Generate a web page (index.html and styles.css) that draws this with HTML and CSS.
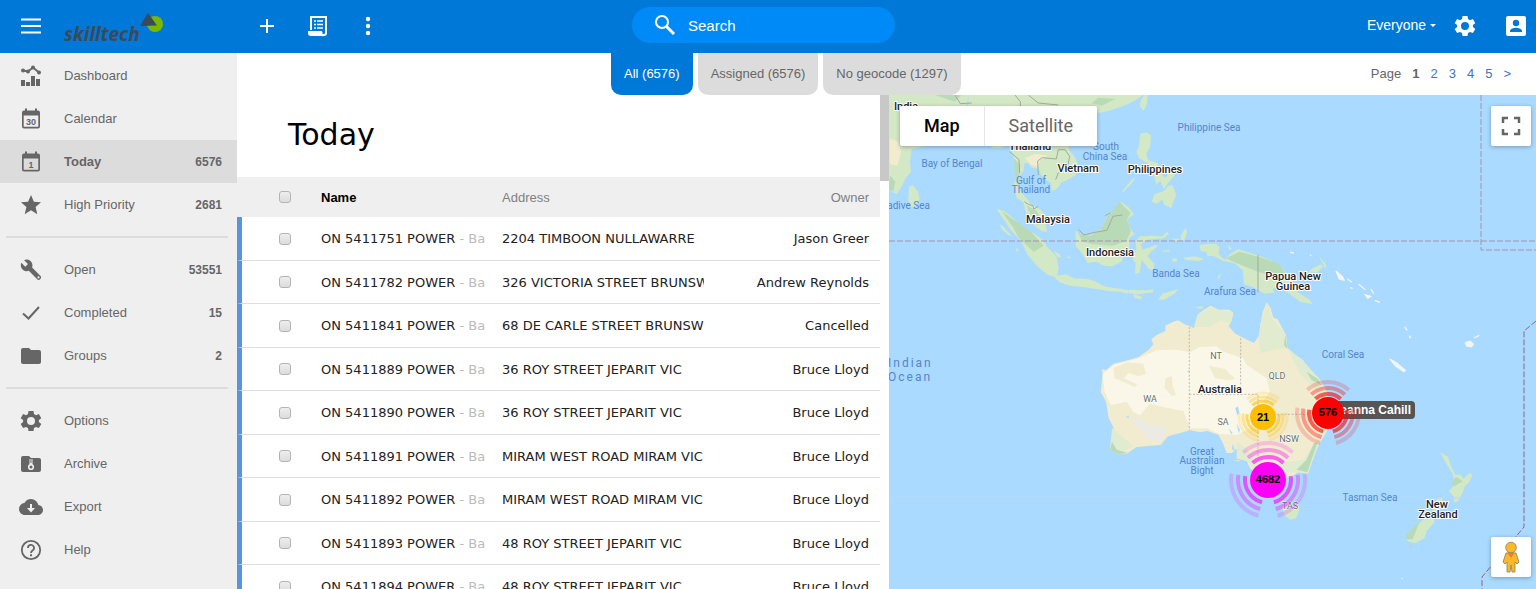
FILE: index.html
```html
<!DOCTYPE html>
<html lang="en">

<head>
    <meta charset="UTF-8">
    <meta name="viewport" content="width=device-width, initial-scale=1.0">
    <title>Today - skilltech</title>
    <link rel="stylesheet" href="styles.css">
</head>

<body>

    <header class="topbar">
        <div class="topbar-left">
            <button class="icon-btn" aria-label="Menu">
                <svg width="22" height="22" viewBox="0 0 22 22"><path d="M1 4.500h20M1 11h20M1 17.500h20" stroke="#fff" stroke-width="2"/></svg>
            </button>
            <a class="logo" href="#">
                <span>skilltech</span>
                <svg width="24" height="20" viewBox="0 0 24 20"><circle cx="15" cy="11" r="8" fill="#7ab800"/><path d="M0 13L8 0l9 12.500z" fill="#3c4a57"/></svg>
            </a>
            <div class="actions">
                <button class="icon-btn" aria-label="Add">
                    <svg width="24" height="24" viewBox="0 0 24 24"><path d="M12 5v14M5 12h14" stroke="#fff" stroke-width="2"/></svg>
                </button>
                <button class="icon-btn" aria-label="Reports">
                    <svg width="24" height="24" viewBox="0 0 24 24" fill="none" stroke="#fff" stroke-width="2"><path d="M5 16V3h15v16a2 2 0 0 1-2 2H5a2 2 0 0 1-2-2v-1h12v1a2 2 0 0 0 3 2"/><path d="M3.500 19.500h13" stroke-width="3"/><path d="M8 7h2M11 7h6M8 10.500h2M11 10.500h6M8 14h2M11 14h6" stroke-width="1.500"/></svg>
                </button>
                <button class="icon-btn" aria-label="More">
                    <svg width="24" height="24" viewBox="0 0 24 24" fill="#fff"><circle cx="11" cy="5" r="2.200"/><circle cx="11" cy="12" r="2.200"/><circle cx="11" cy="19" r="2.200"/></svg>
                </button>
            </div>
        </div>

        <label class="search">
            <svg width="22" height="22" viewBox="0 0 22 22" fill="none" stroke="#fff"><circle cx="8" cy="8" r="6" stroke-width="2"/><path d="M12.500 12.500l7.500 7.500" stroke-width="3"/></svg>
            <input type="text" placeholder="Search" aria-label="Search">
        </label>

        <div class="topbar-right">
            <button class="user-filter">Everyone <i class="caret"></i></button>
            <button class="icon-btn" aria-label="Settings">
                <svg width="24" height="24" viewBox="0 0 24 24" fill="#fff"><use href="#gear"/></svg>
            </button>
            <button class="icon-btn account" aria-label="Account">
                <svg width="22" height="22" viewBox="0 0 22 22"><rect x="1" y="1" width="20" height="20" rx="2" fill="#fff"/><circle cx="11" cy="8" r="3.200" fill="#0078d8"/><path d="M5 17v-1c0-2 4-3.200 6-3.200s6 1.200 6 3.200v1z" fill="#0078d8"/></svg>
            </button>
        </div>
    </header>

    <div class="page">
        <nav class="sidebar">
            <a href="#">
                <svg width="24" height="24" viewBox="0 0 24 24"><path d="M2 16h4v6H2zM7 18h4v4H7zM12 12h4v10h-4zM17 15h4v7h-4z"/><path d="M4 6.500l5 1 5-4 6 5" fill="none" stroke="#666" stroke-width="1.800"/><circle cx="4" cy="6.500" r="2"/><circle cx="9" cy="7.500" r="2"/><circle cx="14" cy="3.500" r="2"/><circle cx="20" cy="8.500" r="2"/></svg>
                <span>Dashboard</span>
            </a>
            <a href="#">
                <svg width="24" height="24" viewBox="0 0 24 24"><use href="#cal"/><text x="12" y="18" class="cal-day">30</text></svg>
                <span>Calendar</span>
            </a>
            <a href="#" class="active">
                <svg width="24" height="24" viewBox="0 0 24 24"><use href="#cal"/><text x="12" y="18" class="cal-day">1</text></svg>
                <span>Today</span><b>6576</b>
            </a>
            <a href="#">
                <svg width="24" height="24" viewBox="0 0 24 24"><path d="M12 2l2.900 6.700 7.100.5-5.400 4.700 1.700 7.300L12 17.300l-6.300 3.900 1.700-7.300L2 9.200l7.100-.5z"/></svg>
                <span>High Priority</span><b>2681</b>
            </a>
            <hr>
            <a href="#">
                <svg width="24" height="24" viewBox="0 0 24 24"><path fill-rule="evenodd" d="M22 18l-9.100-9.100c.9-2.300.4-5-1.500-6.900-2-2-5-2.400-7.400-1.300L8.300 5 5.300 8 .9 3.700C-.2 6.100.3 9.100 2.300 11.100c1.900 1.900 4.600 2.400 6.900 1.500l9.100 9.100c1 1.300 2.500 1.300 3.700 0 1.200-1.200 1.300-2.500 0-3.700zM20 18.700a1.200 1.200 0 1 1 0 2.400 1.200 1.200 0 0 1 0-2.400z" transform="translate(1.500 1.500) scale(.9)"/></svg>
                <span>Open</span><b>53551</b>
            </a>
            <a href="#">
                <svg width="24" height="24" viewBox="0 0 24 24"><path d="M4 12.500l5.500 5L20 6" fill="none" stroke="#666" stroke-width="2"/></svg>
                <span>Completed</span><b>15</b>
            </a>
            <a href="#">
                <svg width="24" height="24" viewBox="0 0 24 24"><use href="#folder"/></svg>
                <span>Groups</span><b>2</b>
            </a>
            <hr>
            <a href="#">
                <svg width="24" height="24" viewBox="0 0 24 24"><use href="#gear"/></svg>
                <span>Options</span>
            </a>
            <a href="#">
                <svg width="24" height="24" viewBox="0 0 24 24"><use href="#folder"/><path d="M10 8h4M10 10h4" stroke="#efefef"/><path d="M10.500 11h3v2h-3z" fill="#efefef"/><circle cx="12" cy="15" r="2.300" fill="none" stroke="#efefef" stroke-width="1.600"/></svg>
                <span>Archive</span>
            </a>
            <a href="#">
                <svg width="24" height="24" viewBox="0 0 24 24"><path d="M19.350 10.040A7.490 7.490 0 0 0 12 4C9.110 4 6.600 5.640 5.350 8.040A5.994 5.994 0 0 0 0 14c0 3.310 2.690 6 6 6h13c2.760 0 5-2.240 5-5 0-2.640-2.050-4.780-4.650-4.960z"/><path d="M11 9h2v4h3l-4 4.500L8 13h3z" fill="#efefef"/></svg>
                <span>Export</span>
            </a>
            <a href="#">
                <svg width="24" height="24" viewBox="0 0 24 24"><circle cx="12" cy="12" r="9.200" fill="none" stroke="#666" stroke-width="1.800"/><path d="M9 10a3 3 0 1 1 4.500 2.500C12.500 13.300 12 13.800 12 15" fill="none" stroke="#666" stroke-width="1.800"/><path d="M11 16.300h2v2h-2z"/></svg>
                <span>Help</span>
            </a>
        </nav>

        <main>
            <div class="subbar">
                <div class="tabs">
                    <button class="tab selected">All (6576)</button>
                    <button class="tab">Assigned (6576)</button>
                    <button class="tab">No geocode (1297)</button>
                </div>
                <div class="pager">
                    <span>Page</span>
                    <b>1</b>
                    <a href="#">2</a>
                    <a href="#">3</a>
                    <a href="#">4</a>
                    <a href="#">5</a>
                    <a href="#">&gt;</a>
                </div>
            </div>

            <div class="content">
                <section class="list">
                    <h1>Today</h1>
                    <table>
                        <colgroup>
                            <col class="c-check"><col class="c-name"><col class="c-addr"><col>
                        </colgroup>
                        <thead>
                            <tr>
                                <th><input type="checkbox" aria-label="Select all"></th>
                                <th class="sorted">Name</th>
                                <th>Address</th>
                                <th>Owner</th>
                            </tr>
                        </thead>
                        <tbody>
                            <tr>
                                <td><input type="checkbox" aria-label="Select 5411751"></td>
                                <td><div>ON 5411751 POWER <i>- Ba</i></div></td>
                                <td><div>2204 TIMBOON NULLAWARRE</div></td>
                                <td>Jason Greer</td>
                            </tr>
                            <tr>
                                <td><input type="checkbox" aria-label="Select 5411782"></td>
                                <td><div>ON 5411782 POWER <i>- Ba</i></div></td>
                                <td><div>326 VICTORIA STREET BRUNSW</div></td>
                                <td>Andrew Reynolds</td>
                            </tr>
                            <tr>
                                <td><input type="checkbox" aria-label="Select 5411841"></td>
                                <td><div>ON 5411841 POWER <i>- Ba</i></div></td>
                                <td><div>68 DE CARLE STREET BRUNSW</div></td>
                                <td>Cancelled</td>
                            </tr>
                            <tr>
                                <td><input type="checkbox" aria-label="Select 5411889"></td>
                                <td><div>ON 5411889 POWER <i>- Ba</i></div></td>
                                <td><div>36 ROY STREET JEPARIT VIC</div></td>
                                <td>Bruce Lloyd</td>
                            </tr>
                            <tr>
                                <td><input type="checkbox" aria-label="Select 5411890"></td>
                                <td><div>ON 5411890 POWER <i>- Ba</i></div></td>
                                <td><div>36 ROY STREET JEPARIT VIC</div></td>
                                <td>Bruce Lloyd</td>
                            </tr>
                            <tr>
                                <td><input type="checkbox" aria-label="Select 5411891"></td>
                                <td><div>ON 5411891 POWER <i>- Ba</i></div></td>
                                <td><div>MIRAM WEST ROAD MIRAM VIC</div></td>
                                <td>Bruce Lloyd</td>
                            </tr>
                            <tr>
                                <td><input type="checkbox" aria-label="Select 5411892"></td>
                                <td><div>ON 5411892 POWER <i>- Ba</i></div></td>
                                <td><div>MIRAM WEST ROAD MIRAM VIC</div></td>
                                <td>Bruce Lloyd</td>
                            </tr>
                            <tr>
                                <td><input type="checkbox" aria-label="Select 5411893"></td>
                                <td><div>ON 5411893 POWER <i>- Ba</i></div></td>
                                <td><div>48 ROY STREET JEPARIT VIC</div></td>
                                <td>Bruce Lloyd</td>
                            </tr>
                            <tr>
                                <td><input type="checkbox" aria-label="Select 5411894"></td>
                                <td><div>ON 5411894 POWER <i>- Ba</i></div></td>
                                <td><div>48 ROY STREET JEPARIT VIC</div></td>
                                <td>Bruce Lloyd</td>
                            </tr>
                        </tbody>
                    </table>
                </section>

                <div class="scrollbar"><div class="thumb"></div></div>

                <section class="map">
                    <svg class="map-canvas" viewBox="0 0 647 494" preserveAspectRatio="xMinYMin slice">
                        <!-- south east asia -->
                        <g transform="translate(-4 0) scale(.3333)">
                            <g class="land">
                                <path d="M12 0H250L245 40 262 90 205 100 160 140 100 158 80 163 75 200 78 230 62 250 48 278 35 298 20 290 12 250z"/>
                                <path d="M72 275l12-4 14 18 6 22-10 22-16 4-8-22z"/>
                                <path d="M250 0H775L758 12 735 25 700 38 670 48 640 54 630 62 540 80 545 130 553 165 572 190 580 215 570 242 545 256 530 262 518 280 500 289 498 265 480 252 468 240 462 222 440 218 430 205 418 205 416 228 405 240 398 265 408 290 425 310 438 328 465 342 478 358 482 385 486 412 470 408 440 385 422 350 415 322 395 308 386 270 394 240 392 210 380 170 370 150 345 160 322 158 300 100 270 70 250 40z"/>
                                <path d="M778 0h10l-2 25-10 22-12-14 4-18z"/>
                                <path d="M335 342l22 6 28 22 28 26 32 18 28 20 14 22 28 28 6 38-6 26-30-10-32-28-26-32-18-38-32-36-22-32z"/>
                                <path d="M512 542l30-4 26 12 40 2 26 8 20 12 28 6 30 4-4 8-36-2-38-6-40-6-38-4-32-10-14-12z"/>
                                <path d="M706 582l24 4-2 10-18-4zM732 584l50 2 24-4-2 10-46 6-28-4zM745 598l28 8-8 8-18-8zM820 614l12-18 48-14-12 14-30 18z"/>
                                <path d="M572 404l10 14 28 4 36-18 18-34 16-14 28-36 22 16 18 22-20 14 4 20 16 26-16 12 2 26-18 18-6 26-28 14-26-2-22-12-26 4-16-28-20-22z"/>
                                <path d="M752 440l12-16 36-2 32 2 14-14 6 8-18 12-46 4-22 14 8 16 36-14 10 2-22 18-10 14 20 22-2 20-14-4-22-28-6 40-14 2 2-34-10-8 12-32z"/>
                                <path d="M766 116l18-4 14 8-2 34-12 22 6 20 28 8 6 16-22-4-20-16-20-10-8-20 8-16z"/>
                                <path d="M800 320l8-22 28-10 14-16 12-2 12 30-12 26-2 14-22-10-6-16-18 12zM806 238l18-6 16 16 22-22 8 14-14 16-20 26-10-24-12 10z"/>
                                <path d="M712 288l28-34 12-6-16 22-22 22z"/>
                                <path d="M888 420l14-22 4 12-6 22-12 8zM862 430l20 2v6h-18zM895 488l34-4 28 8-16 6-40-4zM860 492l14-2 4 8-12 4zM944 456l40-10h12v36l-18-8-30-6zM830 468l24-4v6h-22zM930 638l26-6-6 10z"/>
                                <path d="M504 466l18 10 8 12-12-2zM344 388l10 6 26 28-10-2-20-18zM390 456l12 10-6 4zM545 484l12 2-4 6z"/>
                            </g>
                            <g class="forest">
                                <path d="M580 418l36 4 30-16 20-38 38-48 32 34-10 20 12 34-14 30-40 14-60-4-30-8-12-20z"/>
                                <path d="M350 348l36 26 50 34 40 44-30 18-44-40-20-36z"/>
                                <path d="M425 332l30 16 20 34-18 8-22-34zM386 190l20 20-6 60-8-10zM540 80h50l-10 10 50-28-30 4z"/>
                                <path d="M150 0h80l-20 20zM640 8l50 4-40 20-30-8zM15 240l16 20-6 30-12-8z"/>
                            </g>
                            <path class="dry" d="M14 130l26 10 8 30-10 42-24-4zM420 190l30-14 40 6-24 14-8 20-20-6z"/>
                            <path class="border" d="M390 0l16 20 0 30M430 0l30 24 60 6M210 0l16 26 34-2M374 170l28 24 2 40M460 240l-2-42 14-10 42 4 6-28 20 0 14 20-6 30-28 20-8 20M418 320l12 8 14 4 2 10 14-8M582 404l14 16 34-8 36-6 18-42 28-4M660 362l16-8"/>
                        </g>
                        <!-- papua new guinea and the islands -->
                        <g transform="translate(317 0) scale(.3333)">
                            <g class="land">
                                <path d="M-20 450l34-4 26 8-2 24 18 16 16-16 24-16 24 8 40 12 40 16 28 20 20 30 4 24 26 22 34 20 8 14-38-8-34-26-22-12-26-2 4 14-28 2-36-20-26-8-4-42-24-22-34-6-28-14-20-2-4-16-18-8z"/>
                                <path d="M320 520l24-12 8 6-18 18-28 2zM340 486l20 22-2 14-10-20zM64 448l14 14-8 2zM46 534l-8 22-2-12z"/>
                            </g>
                            <path class="forest" d="M60 490l40-20 60 16 60 20 18 30-16 16-66-22-60-24z"/>
                            <path class="border" d="M156 480v112"/>
                            <path class="isle" d="M390 528l20 18 4 10-14-4zM424 552l14 10M458 568l20 16M495 582l8 14M478 600l16 4-8 6zM506 616l16 6M432 578l8 2M252 472l12 2M312 480l4 2"/>
                        </g>
                        <!-- australia -->
                        <g transform="translate(201 200) scale(.3333)">
                            <path class="dry" d="M38 238L36 222 48 226 70 206 104 198 146 186 176 164 190 148 184 132 204 118 226 108 226 92 250 80 264 76 284 88 300 94 312 100 322 60 340 46 362 32 386 44 418 44 430 54 424 80 416 94 436 116 462 130 492 144 506 124 512 84 518 52 530 22 542 40 550 68 562 72 574 94 588 120 592 158 610 178 640 196 654 226 684 246 704 276 720 320 718 370 710 410 686 450 662 500 654 536 624 532 600 548 560 540 500 536 480 520 470 498 440 490 444 458 426 474 410 474 400 448 386 420 352 408 330 412 300 406 262 416 234 424 212 450 140 456 110 476 84 478 60 464 66 452 74 420 70 396 56 370 48 320 32 290z"/>
                            <path class="desert" d="M38 238L70 210 146 190 200 166 260 164 300 172 330 156 380 154 400 170 460 190 470 210 530 250 540 290 560 310 500 330 480 400 440 420 386 416 352 400 300 400 240 400 170 370 130 350 110 320 62 330 44 290z"/>
                            <path class="dry" d="M70 220l40-18 50 4 8 30-22 8-30-10-14 16 40 18-8 8-60-26zM226 250l20-8 2 30 10 28-12 4-22-26zM150 360l30-34 40 10 60 12 20 50-60 14-40-28zM356 212l50 10 30 30-20 4-40-6zM560 210l60 10 60 50-10 20-60-30-50-20zM540 290l50 40-40 30-40-30z"/>
                            <path class="green" d="M312 96l12-36 40-24 22 8 42 6-6 34-32-8-30 20zM506 130l6-46 18-60 16 44 42 52 4 38-40 6-40 10zM592 158l48 40 46 52 30 60 2 60-40 100-24 66-34-4-90 4-20-30 130-10 40-60 20-80-10-60-60-60zM66 400l24 20 40 34-44 22-26-14zM440 440l40 30 20 50-30-22-30-8z"/>
                            <path class="forest" d="M586 120l6 42-10-12zM66 440l14 24 34 10-30 4-24-14zM650 230l34 22 10 18-30-16zM620 524l30-30 22-50 10 0-30 88z"/>
                            <path d="M130 366l40 20 60 10-16 44-40-8-20-26-26-20z" fill="#ebeae4"/>
                            <path class="water" d="M436 340l8-6 4 20-6 6zM416 400l12 14-4 4zM440 385l10 20-4 10zM108 366l8-4 0 8zM290 230l10-4-2 6zM428 446l8 24-10-8z"/>
                            <path class="land" d="M576 634l18 8 32-8 2 12-10 24-18 4-18-14zM430 496l22-2-6 6z"/>
                            <path class="isle" d="M900 192l20 12 26 22-4 4-24-16zM944 96l8 10M958 122l4 8"/>
                            <path class="state" d="M298 96v310M452 130v168M298 298h206v190M506 358h150"/>
                        </g>
                        <!-- new zealand -->
                        <g transform="translate(317 215) scale(.3333)">
                            <path class="land" d="M702 426l24 14 10 30 12 24 16 0 8 12 18-16 10 4-10 22-14 14-6 18-14 26-12 2 0-16-16-16 20-22-8-30-18-30zM692 566l18-4-2 20-20 26-4 30-22 26-6 20-28 16-24-6-2-16 22-26 28-22 24-18z"/>
                            <path class="forest" d="M602 672l40-40-12 30-10 26-20 0zM750 500l20 14-24 14-10-8zM610 706l10 0-6 8z"/>
                            <path class="isle" d="M778 98l14-4 10 8-6 8-14-2zM804 84l16-8M586 806h4"/>
                        </g>
                        <path d="M0 403h647" stroke="#b5dafa"/>
                        <path class="frontier" d="M0 146h647M592 0v155h55"/>
                        <path class="frontier dark" d="M647 226l-12 10v196l-42 50v12"/>

                        <g class="country">
                            <text x="17" y="15">India</text>
                            <text x="141" y="55">Thailand</text>
                            <text x="189" y="77">Vietnam</text>
                            <text x="266" y="78">Philippines</text>
                            <text x="159" y="128">Malaysia</text>
                            <text x="221" y="161">Indonesia</text>
                            <text x="404" y="185">Papua New</text>
                            <text x="404" y="195">Guinea</text>
                            <text x="331" y="298">Australia</text>
                            <text x="548" y="413">New</text>
                            <text x="549" y="423">Zealand</text>
                        </g>
                        <g class="sea">
                            <text x="320" y="36">Philippine Sea</text>
                            <text x="217" y="55">South</text>
                            <text x="216" y="65">China Sea</text>
                            <text x="63" y="72">Bay of Bengal</text>
                            <text x="142" y="89">Gulf of</text>
                            <text x="142" y="98">Thailand</text>
                            <text x="9" y="114">Laccadive Sea</text>
                            <text x="287" y="182">Banda Sea</text>
                            <text x="341" y="200">Arafura Sea</text>
                            <text x="454" y="263">Coral Sea</text>
                            <text x="313" y="360">Great</text>
                            <text x="313" y="369">Australian</text>
                            <text x="313" y="379">Bight</text>
                            <text x="481" y="406">Tasman Sea</text>
                        </g>
                        <g class="ocean">
                            <text x="-1" y="272">Indian</text>
                            <text x="-1" y="286">Ocean</text>
                        </g>
                        <g class="state-name">
                            <text x="327" y="264">NT</text>
                            <text x="388" y="284">QLD</text>
                            <text x="261" y="307">WA</text>
                            <text x="334" y="330">SA</text>
                            <text x="400" y="347">NSW</text>
                            <text x="401" y="414">TAS</text>
                        </g>

                        <rect x="432" y="306" width="94" height="18" rx="4" fill="#555"/>
                        <text x="522" y="319" class="pin-name">eanna Cahill</text>

                        <!-- clusters: rings are cut in three arcs, dashes in degrees -->
                        <g class="cluster" transform="translate(374 322)" stroke="#ffbf00">
                            <circle r="16" pathLength="360"/><circle r="20" pathLength="360"/><circle r="24" pathLength="360"/>
                            <circle r="13" class="core" fill="#ffbf00"/><text y="4">21</text>
                        </g>
                        <g class="cluster wide" transform="translate(439 318)" stroke="#ff0000">
                            <circle r="19" pathLength="360"/><circle r="25" pathLength="360"/><circle r="31" pathLength="360"/>
                            <circle r="16" class="core" fill="#ff0000"/><text y="3">576</text>
                        </g>
                        <g class="cluster wide" transform="translate(379 385)" stroke="#ff00ff">
                            <circle r="23" pathLength="360"/><circle r="30" pathLength="360"/><circle r="37" pathLength="360"/>
                            <circle r="18" class="core" fill="#ff00f6"/><text y="3">4682</text>
                        </g>
                    </svg>

                    <div class="map-type">
                        <button class="on">Map</button>
                        <button>Satellite</button>
                    </div>
                    <button class="map-btn fullscreen" aria-label="Full screen">
                        <svg width="20" height="20" viewBox="0 0 20 20"><path d="M2 7V2h5M13 2h5v5M18 13v5h-5M7 18H2v-5" fill="none" stroke="#666" stroke-width="2.500"/></svg>
                    </button>
                    <button class="map-btn pegman" aria-label="Street view">
                        <svg width="20" height="32" viewBox="0 0 20 32"><path d="M5 12h10l3 9-2 2-2-2v10h-3l-1-7-1 7H6V21l-2 2-2-2z" fill="#fbb829" stroke="#8a8060" stroke-width=".8"/><path d="M6 11.500h8l-4 5.500z" fill="#e8832a"/><circle cx="10" cy="6.500" r="5.300" fill="#fbb829" stroke="#8a8060" stroke-width=".8"/></svg>
                    </button>
                </section>
            </div>
        </main>
    </div>

    <!-- shared icon shapes -->
    <svg class="defs" width="0" height="0">
        <symbol id="gear" viewBox="0 0 24 24">
            <path fill-rule="evenodd" d="M9.500 2h5l.5 3 2 1.200 2.900-1.200 2.400 4.200-2.400 1.800v2l2.400 1.900-2.400 4.200-2.900-1.200-2 1.200-.5 2.900h-5L9 19.100l-2-1.200-2.900 1.200-2.400-4.200L4.100 13v-2L1.700 9.200 4.100 5 7 6.200 9 5zM12 8a4 4 0 1 0 0 8 4 4 0 0 0 0-8z"/>
        </symbol>
        <symbol id="cal" viewBox="0 0 24 24">
            <path fill-rule="evenodd" d="M6 1.500h2V3.500h8V1.500h2V3.500h1a2 2 0 0 1 2 2v14a2 2 0 0 1-2 2H5a2 2 0 0 1-2-2v-14a2 2 0 0 1 2-2h1zM4.700 8.500v11.300h14.600V8.500z"/>
        </symbol>
        <symbol id="folder" viewBox="0 0 24 24">
            <path d="M10 4H4a2 2 0 0 0-2 2v12c0 1.100.9 2 2 2h16a2 2 0 0 0 2-2V8a2 2 0 0 0-2-2h-8z"/>
        </symbol>
    </svg>

</body>

</html>
```
FILE: styles.css
```css
* {
    box-sizing: border-box;
}

body {
    margin: 0;
    height: 100vh;
    display: flex;
    flex-direction: column;
    overflow: hidden;
    font-family: "Liberation Sans", Arial, sans-serif;
    font-size: 13px;
    color: #666;
    background: #fff;
}

a {
    text-decoration: none;
}

button {
    border: 0;
    padding: 0;
    background: none;
    font: inherit;
    color: inherit;
    cursor: pointer;
}

svg {
    display: block;
}

.defs {
    position: absolute;
}

/* top bar */

.topbar {
    flex: none;
    height: 53px;
    display: grid;
    grid-template-columns: 632px 263px 1fr;
    background: #0078d8;
    color: #fff;
}

.topbar-left,
.topbar-right,
.actions {
    display: flex;
    align-items: center;
}

.topbar-left {
    padding: 0 0 1px 20px;
}

.logo {
    display: flex;
    align-items: flex-start;
    width: 191px;
    height: 33px;
    margin-left: 22px;
    color: #3c4a57;
    font: italic bold 19px/24px "Open Sans", sans-serif;
}

.logo span {
    margin-top: 12px;
}

.logo svg {
    margin-top: 3px;
}

.actions {
    gap: 27px;
}

.search {
    display: flex;
    align-items: center;
    height: 36px;
    margin-top: 7px;
    padding-left: 22px;
    border-radius: 18px;
    background: #008af8;
}

.search input {
    width: 180px;
    margin-left: 12px;
    padding: 0;
    border: 0;
    outline: 0;
    background: none;
    font: 15px "Liberation Sans", Arial, sans-serif;
    color: #fff;
}

.search input::placeholder {
    color: #fff;
    opacity: 1;
}

.topbar-right {
    justify-content: flex-end;
    padding: 0 9px 2px 0;
}

.user-filter {
    margin-right: 17px;
    padding-bottom: 2px;
    font-size: 14px;
}

.caret {
    display: inline-block;
    vertical-align: middle;
    border: 3px solid transparent;
    border-top-color: #fff;
    border-bottom: 0;
}

.account {
    margin-left: 28px;
}

/* side menu */

.page {
    flex: 1;
    min-height: 0;
    display: flex;
}

.sidebar {
    flex: none;
    width: 237px;
    padding-top: 1px;
    background: #efefef;
    overflow: hidden;
}

.sidebar a {
    display: flex;
    align-items: center;
    height: 43px;
    padding: 0 15px 0 19px;
    color: #666;
}

.sidebar a svg {
    margin-right: 21px;
    fill: #666;
}

.sidebar a b {
    margin-left: auto;
    font-size: 12px;
}

.sidebar .active {
    background: #dcdcdc;
    font-weight: bold;
}

.sidebar hr {
    height: 2px;
    margin: 10px 9px 10px 6px;
    border: 0;
    background: #dcdcdc;
}

.cal-day {
    font: bold 9px "Liberation Sans", Arial, sans-serif;
    text-anchor: middle;
}

/* tabs and pager */

main {
    flex: 1;
    min-width: 0;
    display: flex;
    flex-direction: column;
}

.subbar {
    flex: none;
    height: 42px;
    display: flex;
    justify-content: space-between;
    padding: 0 25px 0 374px;
}

.tabs {
    display: flex;
    gap: 5px;
}

.tab {
    padding: 0 13px 2px;
    border-radius: 0 0 10px 10px;
    background: #dcdcdc;
}

.tab.selected {
    background: #0078d8;
    color: #fff;
}

.pager {
    display: flex;
    align-items: center;
    gap: 11px;
    padding-bottom: 2px;
}

.pager a {
    color: #4472c4;
}

/* job list */

.content {
    flex: 1;
    min-height: 0;
    display: flex;
}

.list {
    flex: none;
    width: 643px;
    overflow: hidden;
}

h1 {
    margin: 0;
    height: 82px;
    padding-left: 51px;
    font: 30px/80px "DejaVu Sans", Verdana, sans-serif;
    color: #000;
}

table {
    width: 100%;
    table-layout: fixed;
    border-collapse: separate;
    border-spacing: 0;
}

.c-check {
    width: 84px;
}

.c-name {
    width: 181px;
}

.c-addr {
    width: 216px;
}

th,
td {
    padding: 0;
    text-align: left;
    white-space: nowrap;
}

th {
    height: 40px;
    background: #efefef;
    font-weight: normal;
    color: #808080;
}

th.sorted {
    font-weight: bold;
    color: #000;
}

td {
    height: 43px;
    border-bottom: 1px solid #dedede;
    font-family: "DejaVu Sans", Verdana, sans-serif;
    color: #222;
}

tbody tr:nth-child(odd) td {
    height: 44px;
}

td:first-child {
    border-left: 5px solid #5a94dc;
}

td div {
    margin-right: 14px;
    overflow: hidden;
}

td i {
    font-style: normal;
    color: #bbb;
}

th:last-child,
td:last-child {
    padding-right: 11px;
    text-align: right;
}

input[type="checkbox"] {
    appearance: none;
    display: block;
    width: 12px;
    height: 12px;
    margin: 0 0 0 42px;
    border: 1px solid #b4b4b4;
    border-radius: 3px;
    background: linear-gradient(#eee, #dcdcdc);
}

td input[type="checkbox"] {
    margin-left: 37px;
}

.scrollbar {
    flex: none;
    width: 9px;
}

.thumb {
    height: 86px;
    background: #c8c8c8;
}

/* map */

.map {
    position: relative;
    flex: 1;
    min-width: 0;
    overflow: hidden;
    background: #aadaff;
}

.map-canvas {
    width: 100%;
    height: 100%;
    font-family: Roboto, sans-serif;
}

.land {
    fill: #d3e8c4;
}

.forest {
    fill: #b9dab6;
}

.green {
    fill: #e0ebcf;
}

.dry {
    fill: #f1ebcf;
}

.desert {
    fill: #fbf7e8;
}

.water {
    fill: #aadaff;
}

.isle {
    fill: #f2f5f0;
    stroke: #f2f5f0;
    stroke-width: 4;
}

.border {
    fill: none;
    stroke: #a3aaa0;
    stroke-width: 3;
}

.state {
    fill: none;
    stroke: #bdbbae;
    stroke-width: 3;
    stroke-dasharray: 6 5;
}

.frontier {
    fill: none;
    stroke: #a393ae;
    stroke-dasharray: 6 2;
}

.frontier.dark {
    stroke: #96657a;
}

.country text {
    font-size: 11px;
    font-weight: 500;
    text-anchor: middle;
    fill: #222;
    stroke: #fff;
    stroke-width: 2px;
    paint-order: stroke;
}

.sea text {
    font-size: 10px;
    text-anchor: middle;
    fill: #5585cc;
}

.ocean text {
    font-size: 12px;
    letter-spacing: 2px;
    fill: #5585cc;
}

.state-name text {
    font-size: 9px;
    text-anchor: middle;
    fill: #5f7068;
    stroke: #fff;
    stroke-width: 1px;
    paint-order: stroke;
}

.pin-name {
    font: bold 12px "Liberation Sans", Arial, sans-serif;
    text-anchor: end;
    fill: #fff;
}

.cluster circle:not(.core) {
    fill: none;
    stroke-width: 3;
    stroke-opacity: .6;
    stroke-dasharray: 85 30 85 38 84 38;
    transform: rotate(-10deg);
}

.cluster.wide circle:not(.core) {
    stroke-width: 4;
}

.cluster circle:nth-child(2):not(.core) {
    stroke-opacity: .35;
}

.cluster circle:nth-child(3):not(.core) {
    stroke-opacity: .18;
}

.cluster .core {
    stroke: none;
}

.cluster text {
    font: bold 11px "Liberation Sans", Arial, sans-serif;
    text-anchor: middle;
    fill: #000;
    stroke: none;
}

.map-type,
.map-btn {
    position: absolute;
    background: #fff;
    border-radius: 2px;
    box-shadow: 0 1px 4px rgba(0, 0, 0, .3);
}

.map-type {
    top: 11px;
    left: 11px;
    display: flex;
    height: 40px;
    font: 18px Roboto, sans-serif;
}

.map-type button {
    padding: 0 24px 2px;
}

.map-type .on {
    border-right: 1px solid #e6e6e6;
    font-weight: 500;
    color: #000;
}

.map-btn {
    right: 5px;
    width: 40px;
    height: 40px;
    display: flex;
    align-items: center;
    justify-content: center;
}

.fullscreen {
    top: 11px;
}

.pegman {
    bottom: 12px;
}
```
